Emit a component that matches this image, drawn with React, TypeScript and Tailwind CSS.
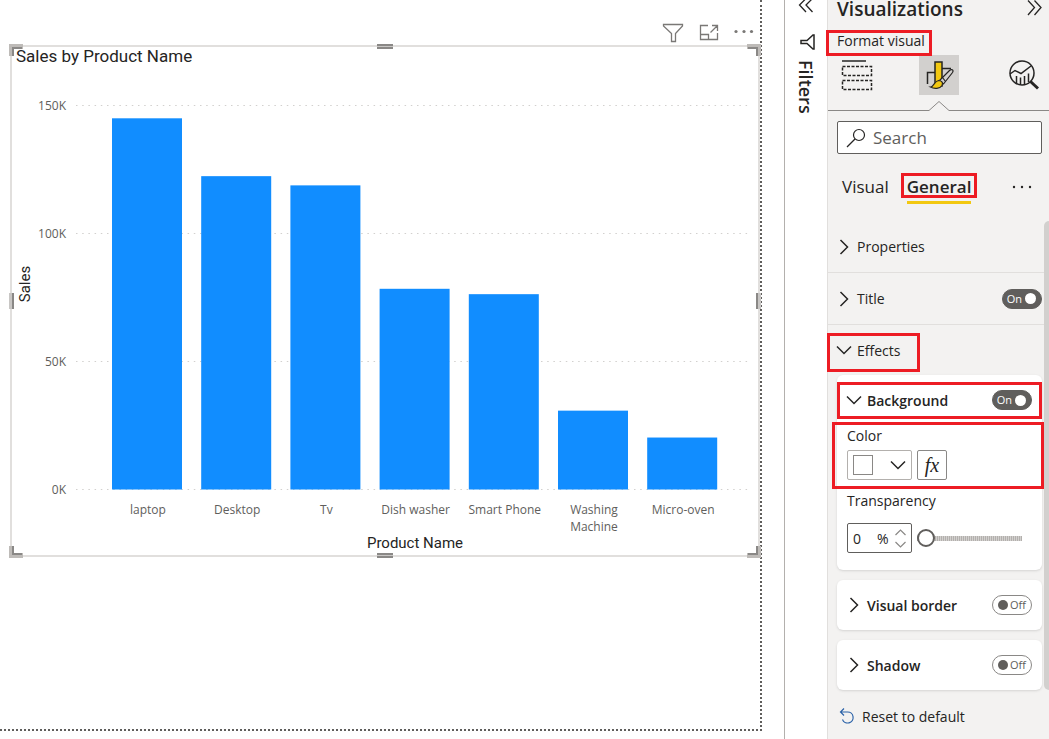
import { useState } from "react";
import type { ReactNode } from "react";

const products = [
  { name: ["laptop"], sales: 145 },
  { name: ["Desktop"], sales: 122.4 },
  { name: ["Tv"], sales: 118.8 },
  { name: ["Dish washer"], sales: 78.4 },
  { name: ["Smart Phone"], sales: 76.3 },
  { name: ["Washing", "Machine"], sales: 30.8 },
  { name: ["Micro-oven"], sales: 20.3 },
];

const ticks = [0, 50, 100, 150];
const baseline = 442.5;
const toY = (value: number) => baseline - value * 2.56;

const SalesChart = () => (
  <svg viewBox="0 0 746 508" className="block w-full" role="img">
    <text x="4" y="15" className="fill-[#252423] font-[Roboto] text-[17px]">
      Sales by Product Name
    </text>
    {ticks.map((tick) => (
      <g key={tick}>
        <line
          x1="64"
          x2="738"
          y1={toY(tick)}
          y2={toY(tick)}
          stroke="#d2d0ce"
          strokeDasharray="1.5 4.7"
        />
        <text
          x="54"
          y={toY(tick) + 4.5}
          textAnchor="end"
          className="fill-[#605e5c] text-[12px]"
        >
          {tick}K
        </text>
      </g>
    ))}
    {products.map((product, i) => (
      <g key={product.name[0]}>
        <rect
          x={100 + i * 89.2}
          y={toY(product.sales)}
          width="70"
          height={baseline - toY(product.sales)}
          fill="#118dff"
        />
        {product.name.map((line, n) => (
          <text
            key={line}
            x={136 + i * 89.2}
            y={467 + n * 17}
            textAnchor="middle"
            className="fill-[#605e5c] text-[12px]"
          >
            {line}
          </text>
        ))}
      </g>
    ))}
    <text
      x="403"
      y="501"
      textAnchor="middle"
      className="fill-[#252423] font-[Roboto] text-[15px]"
    >
      Product Name
    </text>
    <text
      transform="translate(18 237) rotate(-90)"
      textAnchor="middle"
      className="fill-[#252423] font-[Roboto] text-[15px]"
    >
      Sales
    </text>
  </svg>
);

const Corner = ({ className }: { className: string }) => (
  <svg className={`absolute h-[14px] w-[14px] ${className}`} viewBox="0 0 14 14">
    <path d="M0 0H14V5H5V12H0Z" fill="#bebbb8" />
    <path d="M4 12V4H13" fill="none" stroke="#8a8886" strokeWidth="2" />
  </svg>
);

const Handle = ({ className }: { className: string }) => (
  <span className={`absolute border-[#8a8886] bg-[#c8c6c4] ${className}`} />
);

const Mark = ({ className }: { className: string }) => (
  <span
    className={`pointer-events-none absolute z-10 border-3 border-[#ed1c24] ${className}`}
  />
);

const Chevron = ({ open }: { open: boolean }) => (
  <svg
    className="h-4 w-4 shrink-0"
    viewBox="0 0 16 16"
    fill="none"
    stroke="#252423"
    strokeWidth="1.5"
  >
    <path d={open ? "M1 4.5L8 11.5L15 4.5" : "M4.5 1L11.5 8L4.5 15"} />
  </svg>
);

const Toggle = ({ label, initial }: { label: string; initial: boolean }) => {
  const [on, setOn] = useState<boolean>(initial);
  return (
    <label
      className={`relative flex h-5 w-10 shrink-0 cursor-pointer items-center rounded-full border text-[11px] ${
        on
          ? "justify-end gap-[3px] border-[#605e5c] bg-[#605e5c] pr-[5px] text-white"
          : "gap-[2px] border-[#8a8886] bg-white pl-[5px] text-[#605e5c]"
      }`}
    >
      <input
        type="checkbox"
        aria-label={label}
        checked={on}
        onChange={() => setOn(!on)}
        className="absolute inset-0 m-0 cursor-pointer opacity-0"
      />
      {on && <span className="pt-px">On</span>}
      <span
        className={`rounded-full ${on ? "h-[11px] w-[11px] bg-white" : "h-[10px] w-[10px] bg-[#605e5c]"}`}
      />
      {!on && <span className="pt-px">Off</span>}
    </label>
  );
};

const Section = ({
  title,
  open,
  onClick,
  toggle,
}: {
  title: string;
  open: boolean;
  onClick: () => void;
  toggle?: ReactNode;
}) => (
  <div className="flex h-[52px] items-center border-b border-[#e1dfdd] pr-[7px] pl-2">
    <button
      type="button"
      aria-expanded={open}
      onClick={onClick}
      className="flex flex-1 items-center gap-[5px] text-left text-[14px]"
    >
      <Chevron open={open} />
      {title}
    </button>
    {toggle}
  </div>
);

const CardHeader = ({
  title,
  open,
  on,
  onClick,
}: {
  title: string;
  open: boolean;
  on: boolean;
  onClick: () => void;
}) => (
  <div className="flex h-[50px] items-center pr-[10px] pl-[9px]">
    <button
      type="button"
      aria-expanded={open}
      onClick={onClick}
      className="flex flex-1 items-center gap-[5px] text-left text-[14px] font-semibold"
    >
      <Chevron open={open} />
      {title}
    </button>
    <Toggle label={title} initial={on} />
  </div>
);

const ReportCanvas = () => (
  <main className="flex min-w-0 flex-1 flex-col pr-[22px] pb-2">
    <div className="flex-1 border-r-2 border-b-2 border-dotted border-[#605e5c] pt-[21px] pl-[10px]">
      <div className="flex h-6 items-center justify-end gap-[15px] pr-[6px]">
        <button type="button" aria-label="Filters">
          <svg className="h-[22px] w-[22px]" viewBox="0 0 22 22" fill="none" stroke="#7a7876" strokeWidth="1.3">
            <path d="M1.5 2.5H20.5V4L13.5 11.5V19.5H9.5V11.5L1.5 4Z" />
          </svg>
        </button>
        <button type="button" aria-label="Focus mode">
          <svg className="h-[20px] w-[20px]" viewBox="0 0 20 20" fill="none" stroke="#7a7876" strokeWidth="1.3">
            <path d="M9 2.5H1.5V16.5H18.5V10M1.5 11.5H9.5V16.5M11.5 9.5L18 3M13 2.5H18.5V8" />
          </svg>
        </button>
        <button type="button" aria-label="More options">
          <svg className="h-[20px] w-[20px]" viewBox="0 0 20 20" fill="#7a7876">
            <circle cx="2" cy="8.5" r="1.6" />
            <circle cx="10" cy="8.5" r="1.6" />
            <circle cx="17.5" cy="8.5" r="1.6" />
          </svg>
        </button>
      </div>
      <div className="relative border-2 border-[#e1dfdd]">
        <SalesChart />
        <Corner className="-top-[3px] -left-[3px]" />
        <Corner className="-top-[3px] -right-[3px] -scale-x-100" />
        <Corner className="-bottom-[3px] -left-[3px] -scale-y-100" />
        <Corner className="-right-[3px] -bottom-[3px] -scale-100" />
        <Handle className="-top-[3px] left-1/2 h-[5px] w-4 -translate-x-1/2 border-y-2" />
        <Handle className="-bottom-[3px] left-1/2 h-[5px] w-4 -translate-x-1/2 border-y-2" />
        <Handle className="top-1/2 -left-[3px] h-4 w-[5px] -translate-y-1/2 border-r-2" />
        <Handle className="top-1/2 -right-[3px] h-4 w-[5px] -translate-y-1/2 border-l-2" />
      </div>
    </div>
  </main>
);

const FiltersPane = () => (
  <aside className="flex w-[43px] shrink-0 flex-col items-center border-l border-[#b3b0ad]">
    <button type="button" aria-label="Expand filters">
      <svg className="h-[14px] w-4" viewBox="0 0 16 14" fill="none" stroke="#252423" strokeWidth="1.3">
        <path d="M8 -1.5L1.5 5L8 12M14.5 -1.5L8 5L14.5 12" />
      </svg>
    </button>
    <svg className="mt-5 h-4 w-5" viewBox="0 0 20 16" fill="none" stroke="#252423" strokeWidth="1.5">
      <path d="M18 1V15H17L11 9.5H5V6.5H11L17 1Z" />
    </svg>
    <h2 className="mt-[10px] text-[18px] leading-6 font-semibold [writing-mode:vertical-rl]">
      Filters
    </h2>
  </aside>
);

const VisualizationsPane = () => {
  const [properties, setProperties] = useState<boolean>(false);
  const [title, setTitle] = useState<boolean>(false);
  const [effects, setEffects] = useState<boolean>(true);
  const [background, setBackground] = useState<boolean>(true);
  const [border, setBorder] = useState<boolean>(false);
  const [shadow, setShadow] = useState<boolean>(false);
  const [search, setSearch] = useState<string>("");
  const [transparency, setTransparency] = useState<number>(0);

  return (
    <aside className="w-[222px] shrink-0 border-l border-[#e1dfdd] bg-[#f3f2f1]">
      <div className="flex h-[30px] items-start justify-between pr-[6px] pl-[9px]">
        <h2 className="text-[19px] leading-[18px] font-semibold">Visualizations</h2>
        <button type="button" aria-label="Collapse visualizations">
          <svg className="h-[16px] w-[17px]" viewBox="0 0 17 16" fill="none" stroke="#252423" strokeWidth="1.3">
            <path d="M2 0.5L8.5 7.5L2 15M8.5 0.5L15 7.5L8.5 15" />
          </svg>
        </button>
      </div>
      <div className="relative flex h-[25px] items-center pb-1 pl-[9px] text-[14px]">
        Format visual
        <Mark className="top-0 -left-[2px] h-[26px] w-[106px]" />
      </div>
      <div className="flex items-center justify-between pr-[9px] pl-[9px]">
        <button type="button" aria-label="Build visual" className="flex h-10 w-10 items-center justify-center">
          <svg className="h-8 w-8" viewBox="0 0 32 32" fill="none" stroke="#252423" strokeWidth="1.5">
            <path d="M1 2H25" />
            <path d="M1.5 7.5H30.5V16.5H1.5ZM1.5 21.5H30.5V30.5H1.5Z" strokeDasharray="3 1.5" />
          </svg>
        </button>
        <button type="button" aria-label="Format visual" className="flex h-10 w-10 items-center justify-center bg-[#d2d0ce]">
          <svg className="h-[30px] w-[30px]" viewBox="0 0 30 30" fill="none" stroke="#252423" strokeWidth="1.5">
            <path d="M3.5 24V12.5H11M18 8.5H27" />
            <path d="M11 2H18V26H11Z" fill="#f2c811" />
            <path
              d="M15.5 20.5L25.5 10.5C27.5 8.500 30 10 28.500 12.500L19.5 24Z"
              fill="#d2d0ce"
              strokeWidth="1.2"
            />
            <path d="M18.5 17.5L21.5 21.5" strokeWidth="1.2" />
            <path
              d="M6.5 27C10 27 10 21 14.5 20.5C17.5 20.5 19.5 22.5 18 25.5C16 29 10 29 6.5 27Z"
              fill="#f2c811"
              strokeWidth="1.2"
            />
          </svg>
        </button>
        <button type="button" aria-label="Analytics" className="flex h-10 w-10 items-center justify-end">
          <svg className="h-[32px] w-[32px]" viewBox="0 0 32 32" fill="none" stroke="#252423" strokeWidth="1.5">
            <circle cx="14" cy="14" r="12" />
            <path d="M2 15L7 11.5L13 14.5L23 7" />
            <path d="M8.5 17V24M12.5 18.5V25.5M16.5 17V25.5M20.5 14.5V23" />
            <path d="M22.5 22.5L30 29.5" strokeWidth="3" />
          </svg>
        </button>
      </div>
      <div className="flex h-4 items-end">
        <span className="h-px flex-1 bg-[#8a8886]" />
        <svg className="h-[10px] w-5" viewBox="0 0 20 10" fill="none" stroke="#8a8886">
          <path d="M0 9.5L10 0.5L20 9.5" />
        </svg>
        <span className="h-px flex-1 bg-[#8a8886]" />
      </div>
      <div className="pt-[10px] pr-[7px] pl-[9px]">
        <label className="flex h-[33px] items-center gap-[7px] rounded-xs border border-[#605e5c] bg-white pl-2">
          <svg className="h-[20px] w-[20px] shrink-0" viewBox="0 0 20 20" fill="none" stroke="#252423" strokeWidth="1.2">
            <circle cx="13" cy="7" r="5.5" />
            <path d="M9 11L1 19" />
          </svg>
          <input
            type="text"
            aria-label="Search"
            placeholder="Search"
            value={search}
            onChange={(e) => setSearch(e.target.value)}
            className="w-full min-w-0 text-[17px] outline-none placeholder:text-[#605e5c]"
          />
        </label>
      </div>
      <div className="flex h-[67px] items-start pt-[19px] pr-[17px] pl-[14px] text-[17px] leading-7">
        <button type="button">Visual</button>
        <button type="button" className="relative ml-[18px] border-b-3 border-[#f2c811] font-semibold">
          General
          <Mark className="top-0 -right-[6px] -left-[6px] h-[25px]" />
        </button>
        <button type="button" aria-label="More options" className="ml-auto flex h-7 items-center">
          <svg className="h-1 w-5" viewBox="0 0 20 4" fill="#252423">
            <circle cx="2" cy="2" r="1.2" />
            <circle cx="10" cy="2" r="1.2" />
            <circle cx="18" cy="2" r="1.2" />
          </svg>
        </button>
      </div>
      <div className="relative">
        <span className="absolute inset-y-0 right-0 w-[5px] rounded-l-md bg-[#d2d0ce]" />
        <Section title="Properties" open={properties} onClick={() => setProperties(!properties)} />
        <Section
          title="Title"
          open={title}
          onClick={() => setTitle(!title)}
          toggle={<Toggle label="Title" initial={true} />}
        />
        <div className="relative flex h-[50px] items-center pl-2">
          <button
            type="button"
            aria-expanded={effects}
            onClick={() => setEffects(!effects)}
            className="flex items-center gap-[5px] text-[14px]"
          >
            <Chevron open={effects} />
            Effects
          </button>
          <Mark className="top-2 -left-px h-[39px] w-[93px]" />
        </div>
        {effects && (
          <div className="flex flex-col gap-[10px] pr-[7px] pl-[9px]">
            <div className="relative rounded-md bg-white pb-[17px] shadow">
              <CardHeader title="Background" open={background} on={true} onClick={() => setBackground(!background)} />
              <Mark className="inset-x-0 top-[7px] h-[37px]" />
              <Mark className="top-[47px] -right-[2px] -left-[5px] h-[67px]" />
              {background && (
                <div className="px-[10px] text-[14px]">
                  <div className="h-[25px] leading-[22px]">Color</div>
                  <div className="flex gap-[5px]">
                    <button
                      type="button"
                      aria-label="Color"
                      className="flex h-[30px] w-[65px] items-center justify-between rounded-xs border border-[#b3b0ad] px-[5px]"
                    >
                      <span className="h-5 w-5 border border-[#8a8886]" />
                      <Chevron open={true} />
                    </button>
                    <button
                      type="button"
                      aria-label="Conditional formatting"
                      className="h-[30px] w-[30px] rounded-xs border border-[#8a8886] font-['Liberation_Serif',serif] text-[20px] leading-7 italic"
                    >
                      fx
                    </button>
                  </div>
                  <label htmlFor="transparency" className="block h-[43px] pt-[10px] leading-[22px]">
                    Transparency
                  </label>
                  <div className="flex items-center gap-[5px]">
                    <div className="flex h-[30px] w-[65px] shrink-0 items-center rounded-xs border border-[#605e5c] px-[5px]">
                      <input
                        id="transparency"
                        type="text"
                        value={transparency}
                        onChange={(e) => setTransparency(Number(e.target.value) || 0)}
                        className="w-6 min-w-0 outline-none"
                      />
                      <span>%</span>
                      <span className="ml-auto flex flex-col gap-[5px]">
                        <button type="button" aria-label="Increase" onClick={() => setTransparency(Math.min(100, transparency + 1))}>
                          <svg className="block h-[7px] w-[11px]" viewBox="0 0 11 7" fill="none" stroke="#8a8886" strokeWidth="1.2">
                            <path d="M0.5 6L5.5 1L10.5 6" />
                          </svg>
                        </button>
                        <button type="button" aria-label="Decrease" onClick={() => setTransparency(Math.max(0, transparency - 1))}>
                          <svg className="block h-[7px] w-[11px]" viewBox="0 0 11 7" fill="none" stroke="#8a8886" strokeWidth="1.2">
                            <path d="M0.5 1L5.5 6L10.5 1" />
                          </svg>
                        </button>
                      </span>
                    </div>
                    <input
                      type="range"
                      aria-label="Transparency slider"
                      min={0}
                      max={100}
                      value={transparency}
                      onChange={(e) => setTransparency(Number(e.target.value))}
                      className="h-[5px] w-[105px] appearance-none bg-[repeating-linear-gradient(90deg,#b3b0ad_0_1px,#d2d0ce_1px_2px)] [&::-webkit-slider-thumb]:h-[18px] [&::-webkit-slider-thumb]:w-[18px] [&::-webkit-slider-thumb]:appearance-none [&::-webkit-slider-thumb]:rounded-full [&::-webkit-slider-thumb]:border-2 [&::-webkit-slider-thumb]:border-[#605e5c] [&::-webkit-slider-thumb]:bg-white"
                    />
                  </div>
                </div>
              )}
            </div>
            <div className="rounded-md bg-white shadow">
              <CardHeader title="Visual border" open={border} on={false} onClick={() => setBorder(!border)} />
            </div>
            <div className="rounded-md bg-white shadow">
              <CardHeader title="Shadow" open={shadow} on={false} onClick={() => setShadow(!shadow)} />
            </div>
          </div>
        )}
      </div>
      <button type="button" className="flex h-12 items-center gap-[7px] pt-1 pl-[11px] text-[14px]">
        <svg className="h-4 w-4" viewBox="0 0 16 16" fill="none" stroke="#2b62a8" strokeWidth="1.2">
          <path d="M5 0.5L1.5 4L5 7.5M1.5 4H8.5A5.5 5.5 0 1 1 3.5 11.5" />
        </svg>
        Reset to default
      </button>
    </aside>
  );
};

const App = () => (
  <div className="flex min-h-screen overflow-hidden bg-white font-['Open_Sans',sans-serif] text-[#252423]">
    <ReportCanvas />
    <FiltersPane />
    <VisualizationsPane />
  </div>
);

export default App;
